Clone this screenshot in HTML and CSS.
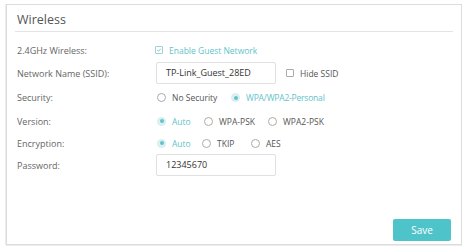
FILE: index.html
```html
<!DOCTYPE html>
<html>
<head>
<meta charset="utf-8">
<link rel="stylesheet" href="styles.css">
</head>
<body>
<div class="panel">
  <div class="title">Wireless</div>
  <div class="rule"></div>
  <div class="form">
    <div class="row r1">
      <div class="label">2.4GHz Wireless:</div>
      <div class="ctrl">
        <span class="opt on first"><span class="cb checked"><svg viewBox="0 0 8 8" width="8" height="8"><path d="M1.6 4.1 L3.3 5.7 L6.4 2.3" fill="none" stroke="#5abfc8" stroke-width="1.1"/></svg></span>Enable Guest Network</span>
      </div>
    </div>
    <div class="row r2">
      <div class="label">Network Name (SSID):</div>
      <div class="ctrl">
        <div class="input">TP-Link_Guest_28ED</div>
        <span class="opt hide"><span class="cb"></span>Hide SSID</span>
      </div>
    </div>
    <div class="row r3">
      <div class="label">Security:</div>
      <div class="ctrl">
        <span class="opt w74"><span class="rd"></span>No Security</span>
        <span class="opt on tight"><span class="rd sel"></span>WPA/WPA2-Personal</span>
      </div>
    </div>
    <div class="row r4">
      <div class="label">Version:</div>
      <div class="ctrl">
        <span class="opt on w47"><span class="rd sel"></span>Auto</span>
        <span class="opt w64"><span class="rd"></span>WPA-PSK</span>
        <span class="opt"><span class="rd"></span>WPA2-PSK</span>
      </div>
    </div>
    <div class="row r5">
      <div class="label">Encryption:</div>
      <div class="ctrl">
        <span class="opt on w45"><span class="rd sel"></span>Auto</span>
        <span class="opt w49"><span class="rd"></span>TKIP</span>
        <span class="opt"><span class="rd"></span>AES</span>
      </div>
    </div>
    <div class="row r6">
      <div class="label">Password:</div>
      <div class="ctrl">
        <div class="input">12345670</div>
      </div>
    </div>
  </div>
  <div class="footer">
    <button class="save">Save</button>
  </div>
</div>
</body>
</html>
```
FILE: styles.css
```css
html, body {
  margin: 0;
  padding: 0;
  background: #ffffff;
}
body {
  font-family: "Open Sans", "Liberation Sans", sans-serif;
  color: #555;
  width: 474px;
  height: 251px;
  overflow: hidden;
}
.panel {
  box-sizing: border-box;
  margin: 4px 0 0 6px;
  width: 456px;
  height: 241px;
  border: 1px solid #dcdcdc;
  box-shadow: -1px 0 0 #ececec, 0 1px 0 #ececec;
  display: flex;
  flex-direction: column;
}
.title {
  font-size: 12.5px;
  color: #555;
  padding: 5px 0 0 10px;
  height: 19px;
  line-height: 19px;
}
.rule {
  margin: 2px 8px 0 8px;
  height: 1px;
  background: #e4e4e4;
}
.form {
  padding: 7px 0 0 10px;
  font-size: 9px;
}
.row {
  display: flex;
  align-items: center;
}
.r1 { height: 22px; }
.r2 { height: 24px; }
.r3 { height: 25px; }
.r4 { height: 22px; }
.r5 { height: 22px; }
.r6 { height: 22px; }
.label {
  width: 140px;
  color: #666;
}
.ctrl {
  display: flex;
  align-items: center;
}
.opt {
  display: inline-flex;
  align-items: center;
  color: #555;
  font-size: 8.5px;
  white-space: nowrap;
}
.opt.on { color: #63c3cb; }
.opt.first { margin-left: -2px; }
.opt.tight { letter-spacing: -0.2px; }
.cb {
  box-sizing: border-box;
  width: 8px;
  height: 8px;
  border: 1px solid #aaa;
  border-radius: 1px;
  margin: 0 6px 0 0;
  display: inline-flex;
  align-items: center;
  justify-content: center;
}
.cb.checked { border-color: #9fd3d8; }
.cb svg { display: block; }
.rd {
  box-sizing: border-box;
  width: 9px;
  height: 9px;
  border: 1px solid #aaa;
  border-radius: 50%;
  margin: 0 6px 0 0;
  position: relative;
  flex: none;
}
.rd.sel {
  border-color: #d3edf0;
  background: #dbf1f3;
}
.rd.sel::after {
  content: "";
  position: absolute;
  left: 1.5px;
  top: 1.5px;
  width: 4px;
  height: 4px;
  border-radius: 50%;
  background: #63c3cb;
}
.input {
  box-sizing: border-box;
  width: 120px;
  height: 22px;
  border: 1px solid #e0e0e0;
  border-radius: 2px;
  padding-left: 9px;
  line-height: 20px;
  color: #333;
  margin-left: -1px;
}
.hide { margin-left: 10px; }
.w74 { width: 74px; }
.w47 { width: 47px; }
.w64 { width: 64px; }
.w45 { width: 45px; }
.w49 { width: 49px; }
.footer {
  margin-top: auto;
  display: flex;
  justify-content: flex-end;
  padding: 0 10px 3px 0;
}
.save {
  width: 58px;
  height: 22px;
  border: none;
  border-radius: 2px;
  background: #4fc3ca;
  color: #fff;
  font-family: "Open Sans", "Liberation Sans", sans-serif;
  font-size: 10px;
  padding: 0;
}
```
